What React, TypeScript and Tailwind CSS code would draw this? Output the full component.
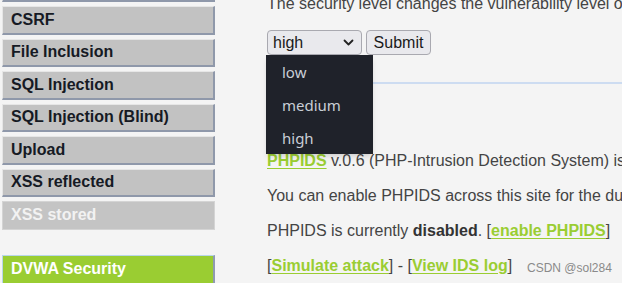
const menu = [
  { label: "", hidden: true },
  { label: "CSRF" },
  { label: "File Inclusion" },
  { label: "SQL Injection" },
  { label: "SQL Injection (Blind)" },
  { label: "Upload" },
  { label: "XSS reflected" },
  { label: "XSS stored", selected: true },
];

function MenuItem({ label, selected }: { label: string; selected?: boolean }) {
  return (
    <div
      className={
        selected
          ? "h-[28.5px] flex items-center pl-[8px] bg-[#c4c4c4] border border-[#d4d4d4] text-[#f2f2f2] font-bold text-[16px] leading-[18px] whitespace-nowrap"
          : "h-[28.5px] flex items-center pl-[8px] bg-[#c2c2c2] border-t border-l border-t-[#e6e6e6] border-l-[#e6e6e6] border-r-2 border-b-2 border-r-[#8f98aa] border-b-[#8f98aa] text-[#161a24] font-bold text-[16px] leading-[18px] whitespace-nowrap"
      }
    >
      {label}
    </div>
  );
}

function Link({ children }: { children: React.ReactNode }) {
  return <span className="text-[#9acd32] font-bold underline decoration-[#9acd32] underline-offset-2">{children}</span>;
}

export default function App() {
  return (
    <div className="w-[622px] h-[283px] overflow-hidden bg-[#f4f4f4] flex font-['Liberation_Sans',Arial,sans-serif] relative">
      {/* ── left menu ── */}
      <div className="w-[215px] shrink-0 pl-[2px] flex flex-col">
        <div className="flex flex-col gap-[4px] mt-[-26.5px]">
          {menu.map((m, i) => (
            <MenuItem key={i} label={m.label} selected={m.selected} />
          ))}
        </div>
        <div className="mt-[25px] h-[30px] flex items-center pl-[8px] bg-[#9acd32] border-t border-l border-t-[#b9d6e8] border-l-[#b9d6e8] border-r-2 border-r-[#8f9bb0] text-white font-bold text-[16px] leading-[18px]">
          DVWA Security
        </div>
      </div>

      {/* ── main ── */}
      <div className="ml-[52px] flex-1 flex flex-col text-[16px] leading-[18px] text-[#444]">
        <div className="mt-[-5px] h-[18px] whitespace-nowrap">
          The security level changes the vulnerability level of DVWA.
        </div>

        <div className="mt-[17px] h-[25px] flex gap-[4px] relative">
          <div className="w-[95px] h-[25px] rounded-[4px] border border-[#a9a9b0] bg-[#e9e9ed] flex items-center pl-[5px] pr-[7px] text-[#1a1a1a]">
            <span className="flex-1">high</span>
            <svg width="11" height="7" viewBox="0 0 11 7" fill="none">
              <path d="M1.5 1.5 L5.5 5.5 L9.5 1.5" stroke="#222" strokeWidth="1.8" strokeLinecap="round" strokeLinejoin="round" />
            </svg>
          </div>
          <div className="w-[65px] h-[25px] rounded-[4px] border border-[#a9a9b0] bg-[#e9e9ed] flex items-center justify-center text-[#1a1a1a]">
            Submit
          </div>

          {/* open dropdown */}
          <div className="absolute left-[-1px] top-[25px] w-[107px] h-[99px] bg-[#1f222a] shadow-md z-10 flex flex-col font-['Noto_Sans',sans-serif] text-[15px] text-[#c9ced6]">
            <div className="h-[33px] flex items-center pl-[16px]">low</div>
            <div className="h-[33px] flex items-center pl-[16px]">medium</div>
            <div className="h-[33px] flex items-center pl-[16px]">high</div>
          </div>
        </div>

        <div className="mt-[27px] h-[2px] bg-[#cddcf1]" />

        <div className="mt-[68px] h-[18px] whitespace-nowrap">
          <Link>PHPIDS</Link> v.0.6 (PHP-Intrusion Detection System) is a security layer for PHP based web applications.
        </div>
        <div className="mt-[17px] h-[18px] whitespace-nowrap">
          You can enable PHPIDS across this site for the duration of your session.
        </div>
        <div className="mt-[17px] h-[18px] whitespace-nowrap">
          PHPIDS is currently <b className="text-[#333]">disabled</b>. [<Link>enable PHPIDS</Link>]
        </div>
        <div className="mt-[17px] h-[18px] whitespace-nowrap">
          [<Link>Simulate attack</Link>] - [<Link>View IDS log</Link>]
        </div>
      </div>

      <div className="absolute left-[527px] top-[261px] text-[12px] leading-[14px] text-[#8a8a8a] whitespace-nowrap">
        CSDN @sol284
      </div>
    </div>
  );
}
